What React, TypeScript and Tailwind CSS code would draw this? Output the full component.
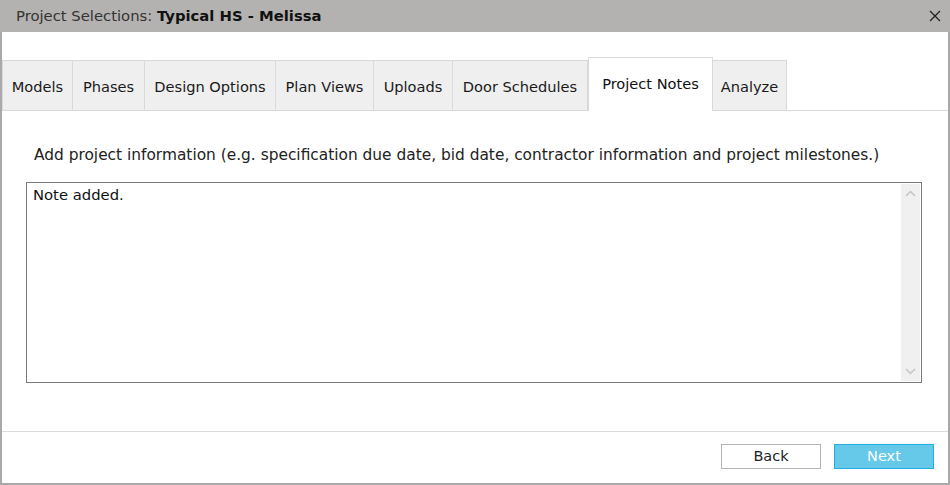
import { useState } from "react";

const tabs = [
    { name: "Models", w: "w-[71px]" },
    { name: "Phases", w: "w-[72px]" },
    { name: "Design Options", w: "w-[131px]" },
    { name: "Plan Views", w: "w-[98px]" },
    { name: "Uploads", w: "w-[79px]" },
    { name: "Door Schedules", w: "w-[135px]" },
    { name: "Project Notes", w: "w-[125px]" },
    { name: "Analyze", w: "w-[74px]" },
];

export default function App() {
    const [active, setActive] = useState("Project Notes");

    return (
        <div className="w-[950px] h-[485px] flex flex-col bg-white font-['DejaVu_Sans',sans-serif] text-[#1a1a1a]">
            {/* title bar */}
            <div className="h-[32px] shrink-0 bg-[#b3b2b0] flex items-center justify-between pl-[16px] pr-[8px]">
                <div className="text-[14.8px] text-[#333]">
                    Project Selections: <span className="font-bold text-[#111]">Typical HS - Melissa</span>
                </div>
                <svg width="12" height="12" viewBox="0 0 12 12" className="mr-[1px]">
                    <path d="M1 1 L11 11 M11 1 L1 11" stroke="#222" strokeWidth="1.3" />
                </svg>
            </div>

            <div className="flex-1 flex flex-col border-x-2 border-b-2 border-[#a9a9a9]">
                {/* tabs */}
                <div className="mt-[26px] h-[53px] flex items-end border-b border-[#d9d9d9]">
                    {tabs.map((t) => (
                        <button
                            key={t.name}
                            onClick={() => setActive(t.name)}
                            className={
                                active === t.name
                                    ? `${t.w} h-[54px] -mb-px bg-white border border-b-0 border-[#d9d9d9] text-[14.6px] text-[#111] pb-[1px] shrink-0`
                                    : `${t.w} h-[50px] bg-[#efefef] border-t border-r border-[#d9d9d9] first:border-l text-[14.6px] text-[#1a1a1a] pt-[2px] shrink-0`
                            }
                        >
                            {t.name}
                        </button>
                    ))}
                </div>

                {/* content */}
                <div className="pl-[32px] pt-[35px] text-[15.4px] leading-[18px] text-[#222]">
                    Add project information (e.g. specification due date, bid date, contractor information and project milestones.)
                </div>
                <div className="ml-[24px] mt-[18px] w-[896px] h-[201px] border border-[#7a7a7a] flex">
                    <div className="flex-1 pl-[6px] pt-[3px] text-[14.8px] leading-[18px] text-[#111]">Note added.</div>
                    <div className="w-[19px] my-[1px] mr-[1px] bg-[#f0f0f0] flex flex-col items-center justify-between py-[6px]">
                        <svg width="11" height="7" viewBox="0 0 11 7">
                            <path d="M1 6 L5.5 1.5 L10 6" fill="none" stroke="#c4c4c4" strokeWidth="1.5" />
                        </svg>
                        <svg width="11" height="7" viewBox="0 0 11 7">
                            <path d="M1 1 L5.5 5.5 L10 1" fill="none" stroke="#c4c4c4" strokeWidth="1.5" />
                        </svg>
                    </div>
                </div>

                <div className="flex-1" />

                {/* footer */}
                <div className="border-t border-[#dcdcdc] h-[52px] flex items-start justify-end gap-[13px] pt-[12px] pr-[14px]">
                    <button className="w-[100px] h-[25px] border border-[#b4b4b4] bg-white text-[14.5px] text-[#222] pt-[1px]">Back</button>
                    <button className="w-[100px] h-[25px] border border-[#24aee0] bg-[#66c9ea] text-[14.5px] text-white pt-[1px]">Next</button>
                </div>
            </div>
        </div>
    );
}
